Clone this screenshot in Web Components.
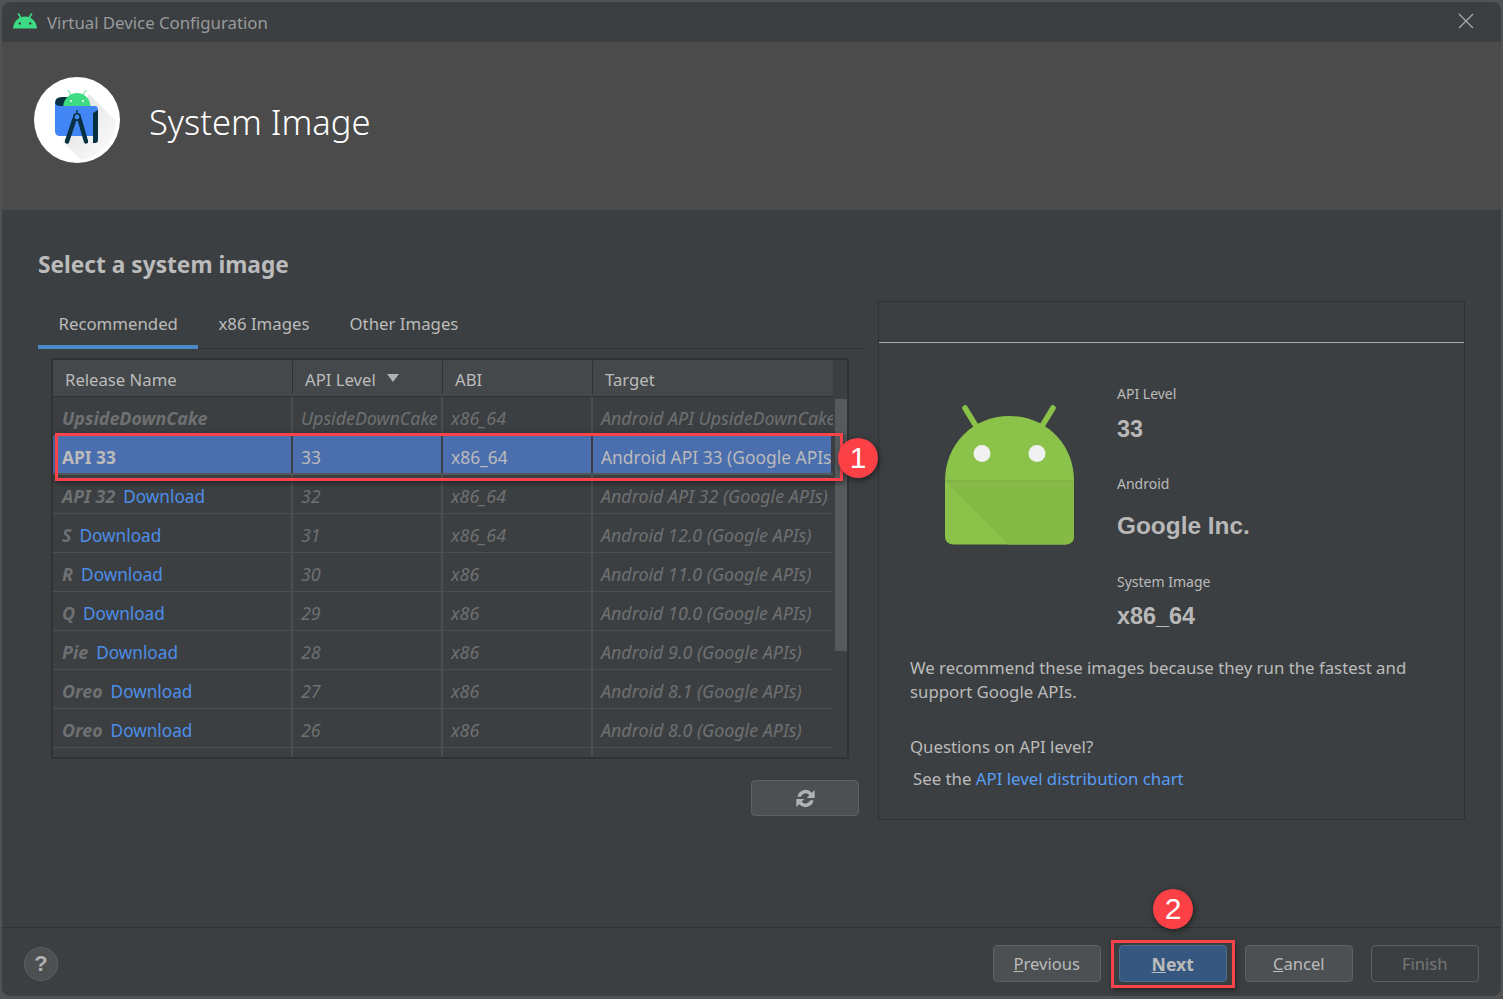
<!DOCTYPE html>
<html>
<head>
<meta charset="utf-8">
<title>Virtual Device Configuration</title>
<style>
  html, body { margin: 0; height: 999px; overflow: hidden; background: #505254; }
  body { font-family: "Noto Sans", "Open Sans", sans-serif; color: #bbb; }
</style>
</head>
<body>
<device-wizard>
  <wizard-titlebar slot="top">Virtual Device Configuration</wizard-titlebar>
  <wizard-banner slot="top">System Image</wizard-banner>
  <image-step>
    <image-tabs></image-tabs>
    <image-table></image-table>
    <image-details slot="side"></image-details>
  </image-step>
  <wizard-footer slot="bottom">
    <wizard-button slot="buttons" key="P" rest="revious"></wizard-button>
    <wizard-button slot="buttons" key="N" rest="ext" kind="primary"></wizard-button>
    <wizard-button slot="buttons" key="C" rest="ancel"></wizard-button>
    <wizard-button slot="buttons" rest="Finish" kind="off"></wizard-button>
  </wizard-footer>
  <!-- red tutorial marks sit over the dialog -->
  <tutorial-box slot="marks" style="left:55px;top:433px;width:782px;height:42px"></tutorial-box>
  <tutorial-dot slot="marks" style="left:838px;top:438px">1</tutorial-dot>
  <tutorial-box slot="marks" style="left:1111px;top:940px;width:118px;height:42px"></tutorial-box>
  <tutorial-dot slot="marks" style="left:1153px;top:889px">2</tutorial-dot>
</device-wizard>

<script>
(function(){

// helper so every element only has to give its markup
function shadow(el, html) {
  el.attachShadow({mode: 'open'}).innerHTML = html
}

class DeviceWizard extends HTMLElement {
  constructor() {
    super()
    shadow(this, `
      <style>
        :host { display: block; position: relative; width: 1503px; height: 999px; }
        .win {
          position: absolute; inset: 2px 2px 3px 2px;
          display: flex; flex-direction: column;
          background: #3c3f41; border-radius: 8px; overflow: hidden;
        }
        .mid { flex: 1; min-height: 0; }
      </style>
      <div class="win">
        <slot name="top"></slot>
        <div class="mid"><slot></slot></div>
        <slot name="bottom"></slot>
      </div>
      <slot name="marks"></slot>`)
  }
}

class WizardTitlebar extends HTMLElement {
  constructor() {
    super()
    shadow(this, `
      <style>
        :host { display: flex; align-items: center; height: 40px; padding: 0 0 0 11px; font-size: 16.8px; color: #989a9c; }
        svg.logo { width: 24px; height: 16px; margin-right: 10px; margin-top: -2px; }
        .txt { flex: 1; }
        svg.close { width: 16px; height: 16px; margin-right: 27px; margin-top: -3px; }
      </style>
      <svg class="logo" viewBox="0 0 24 16">
        <path d="M5.5 1 L8 5 M18.5 1 L16 5" stroke="#3ddc84" stroke-width="1.6" stroke-linecap="round"/>
        <path d="M0 15.5 C.6 8 6 3.6 12 3.6 S23.4 8 24 15.5 Z" fill="#3ddc84"/>
        <circle cx="6.8" cy="10.4" r="1.2" fill="#3c3f41"/><circle cx="17.2" cy="10.4" r="1.2" fill="#3c3f41"/>
      </svg>
      <span class="txt"><slot></slot></span>
      <svg class="close" viewBox="0 0 16 16"><path d="M1 1 L15 15 M15 1 L1 15" stroke="#a5a7a9" stroke-width="1.4"/></svg>`)
  }
}

class WizardBanner extends HTMLElement {
  constructor() {
    super()
    shadow(this, `
      <style>
        :host { display: flex; align-items: center; height: 168px; padding-left: 31px; background: #4b4b4b; }
        svg { width: 88px; height: 88px; margin-right: 28px; margin-bottom: 12px; }
        .t { font-size: 34.5px; font-weight: 300; color: #fff; margin-bottom: 9px; }
      </style>
      <svg viewBox="0 0 88 88">
        <defs><linearGradient id="sh" x1="0" y1="0" x2="1" y2="1">
          <stop offset="0" stop-color="#000" stop-opacity=".14"/><stop offset="1" stop-color="#000" stop-opacity="0"/>
        </linearGradient></defs>
        <circle cx="44" cy="44" r="43" fill="#fff"/>
        <path d="M56 18 L83 45 A40 40 0 0 1 48 84 L30 66 Z" fill="url(#sh)"/>
        <path d="M35 14 L38 19 M53 14 L50 19" stroke="#3ddc84" stroke-width=".9"/>
        <path d="M22 27 Q22 21 29 21 L42 21 L42 36 L22 36 Z" fill="#073042"/>
        <path d="M30 31 C31 21 38 17 44 17 S57 21 57.500 31 Z" fill="#3ddc84"/>
        <circle cx="38" cy="25" r="1" fill="#fff"/><circle cx="50" cy="25" r="1" fill="#fff"/>
        <path d="M22 26 Q22 30 28 30 L62 30 Q65 30 65 34 L65 60 L27 60 Q22 60 22 55 Z" fill="#4285f4"/>
        <path d="M60 37 L65 34 L65 64 Q65 67 62 67 L60 67 Z" fill="#073042"/>
        <path d="M41.500 43 L34 65.500 M46.500 43 L53 65.500" stroke="#073042" stroke-width="4.400" stroke-linecap="round"/>
        <circle cx="44" cy="41" r="3.200" fill="#4285f4" stroke="#073042" stroke-width="1.600"/>
        <path d="M44 34 L44 38" stroke="#073042" stroke-width="1.400"/>
      </svg>
      <span class="t"><slot></slot></span>`)
  }
}

class ImageStep extends HTMLElement {
  constructor() {
    super()
    shadow(this, `
      <style>
        :host { display: block; padding: 39px 36px 0 36px; }
        h2 { margin: 0 0 20px; font-size: 22.7px; line-height: 32px; font-weight: 700; color: #bbb; }
        .cols { display: flex; gap: 14px; align-items: flex-start; }
        .left { width: 826px; }
        .refresh {
          display: flex; align-items: center; justify-content: center;
          box-sizing: border-box; width: 108px; height: 36px; margin: 21px 0 0 713px;
          background: #4c5052; border: 1px solid #5e6060; border-radius: 4px;
        }
        .refresh svg { width: 23px; height: 23px; }
      </style>
      <h2>Select a system image</h2>
      <div class="cols">
        <div class="left">
          <slot></slot>
          <div class="refresh">
            <svg viewBox="0 0 20 20" fill="#afb1b3">
              <path d="M3 8.500 A7.200 7.200 0 0 1 15.500 5 L18 2.500 L18 9.500 L11 9.500 L13.400 7.100 A4.300 4.300 0 0 0 6 8.500 Z"/>
              <path d="M17 11.500 A7.200 7.200 0 0 1 4.500 15 L2 17.500 L2 10.500 L9 10.500 L6.600 12.900 A4.300 4.300 0 0 0 14 11.500 Z"/>
            </svg>
          </div>
        </div>
        <slot name="side"></slot>
      </div>`)
  }
}

class ImageTabs extends HTMLElement {
  constructor() {
    super()
    shadow(this, `
      <style>
        :host { display: flex; height: 47px; border-bottom: 1px solid #323232; font-size: 16.8px; color: #bbb; }
        span { display: flex; align-items: center; box-sizing: border-box; height: 48px; padding: 0 20px 4px; }
        .on { border-bottom: 4px solid #4a88c7; padding: 0 20.500px; }
      </style>
      <span class="on">Recommended</span><span>x86 Images</span><span>Other Images</span>`)
  }
}

const rows = [
  ['UpsideDownCake', false, 'UpsideDownCake', 'x86_64', 'Android API UpsideDownCake'],
  ['API 33', false, '33', 'x86_64', 'Android API 33 (Google APIs)', true],
  ['API 32', true, '32', 'x86_64', 'Android API 32 (Google APIs)'],
  ['S', true, '31', 'x86_64', 'Android 12.0 (Google APIs)'],
  ['R', true, '30', 'x86', 'Android 11.0 (Google APIs)'],
  ['Q', true, '29', 'x86', 'Android 10.0 (Google APIs)'],
  ['Pie', true, '28', 'x86', 'Android 9.0 (Google APIs)'],
  ['Oreo', true, '27', 'x86', 'Android 8.1 (Google APIs)'],
  ['Oreo', true, '26', 'x86', 'Android 8.0 (Google APIs)'],
  ['', false, '', '', '']
]

class ImageTable extends HTMLElement {
  constructor() {
    super()
    let body = rows.map(r => {
      let link = r[1] ? '<a>Download</a>' : ''
      return `<div class="row ${r[5] ? 'sel' : ''}">
        <div class="c"><b>${r[0]}</b>${link}</div><div class="c">${r[2]}</div><div class="c">${r[3]}</div><div class="c">${r[4]}</div>
      </div>`
    }).join('')
    shadow(this, `
      <style>
        :host {
          display: block; position: relative; box-sizing: border-box; width: 798px; height: 401px;
          margin: 9px 0 0 13px; border: 2px solid #323232; overflow: hidden;
        }
        .head, .row { display: grid; grid-template-columns: 240px 150px 150px 240px; width: 780px; }
        .head { height: 37px; background: #45484a; border-bottom: 1px solid #323232; box-sizing: border-box; color: #bbb; font-size: 16.7px; }
        .head div { display: flex; align-items: center; padding-left: 12px; margin: 1px 0 2px; border-right: 1px solid #323232; padding-top: 3px; }
        .head div:last-child { border-right: 0; }
        .arrow { width: 0; height: 0; margin: -2px 0 0 11px; border: 6.500px solid transparent; border-top: 8px solid #afb1b3; border-bottom: 0; }
        .row { box-sizing: border-box; height: 39px; border-bottom: 1px solid #4b4e50; font-size: 17.85px; font-style: italic; color: #6e7072; }
        .c {
          box-sizing: border-box; padding: 4px 0 0 8px; line-height: 35px; white-space: nowrap; overflow: hidden;
          border-right: 2px solid #4b4e50;
        }
        .c:first-child { padding-left: 9px; }
        .c:last-child { border-right: 0; }
        b { font-weight: 700; }
        a { font-style: normal; font-size: 17.2px; color: #4c8ee8; margin-left: 8px; }
        .sel {
          background: linear-gradient(#4b6eaf, #4b6eaf) no-repeat; background-size: 778px 100%;
          color: #bbb; font-style: normal; font-size: 17.4px; border-bottom: 2px solid #53575a;
        }
        .sel .c { border-right-color: #3c3f41; }
        .sel .c:last-child { margin-right: 2px; }
        .bar { position: absolute; left: 780px; top: 0; bottom: 0; width: 14px; background: #3c3f41; }
        .thumb { margin: 39px 0 0 2px; height: 252px; background: #575a5c; }
      </style>
      <div class="head">
        <div>Release Name</div><div>API Level<i class="arrow"></i></div><div>ABI</div><div>Target</div>
      </div>
      ${body}
      <div class="bar"><div class="thumb"></div></div>`)
  }
}

class ImageDetails extends HTMLElement {
  constructor() {
    super()
    shadow(this, `
      <style>
        :host { display: block; box-sizing: border-box; width: 587px; height: 519px; border: 1px solid #323232; font-size: 16.8px; }
        .strip { height: 40px; border-bottom: 1px solid #a9abad; }
        .info { display: flex; padding: 40px 0 0 64px; height: 270px; box-sizing: border-box; }
        svg { width: 132px; height: 144px; margin-top: 19px; margin-right: 42px; flex: none; }
        .k { font-size: 14px; line-height: 20px; color: #bbb; }
        .v { font-family: "Liberation Sans", Arial, sans-serif; font-weight: 700; color: #b8b8b8; font-size: 23.400px; line-height: 28px; }
        .big { font-size: 24.400px; }
        .text { padding-left: 31px; line-height: 24px; color: #bbb; }
        p { margin: 0; }
        .q { margin-top: 31px; }
        .see { margin: 8px 0 0 3px; }
        a { color: #589df6; }
      </style>
      <div class="strip"></div>
      <div class="info">
        <svg viewBox="0 0 132 144">
          <path d="M22 6 L33 24 M110 6 L99 24" stroke="#8bc34a" stroke-width="5.500" stroke-linecap="round"/>
          <path d="M2 79 C2 42 30 14 66.500 14 S131 42 131 79 L131 134 Q131 142.500 122 142.500 L11 142.500 Q2 142.500 2 134 Z" fill="#8bc34a"/>
          <path d="M2 79 L131 79 L131 134 Q131 142.500 122 142.500 L65 142.500 Z" fill="#85ba46"/>
          <path d="M2 79 L131 79" stroke="#7fae45" stroke-width="1.500"/>
          <circle cx="39" cy="51.500" r="8.500" fill="#f1f1f1"/><circle cx="94" cy="51.500" r="8.500" fill="#f1f1f1"/>
        </svg>
        <div>
          <div class="k" style="margin-top:1px">API Level</div>
          <div class="v" style="margin-top:11px">33</div>
          <div class="k" style="margin-top:31px">Android</div>
          <div class="v big" style="margin-top:18px">Google Inc.</div>
          <div class="k" style="margin-top:32px">System Image</div>
          <div class="v" style="margin-top:10px">x86_64</div>
        </div>
      </div>
      <div class="text">
        <p style="margin-top:43px">We recommend these images because they run the fastest and<br>support Google APIs.</p>
        <p class="q">Questions on API level?</p>
        <p class="see">See the <a>API level distribution chart</a></p>
      </div>`)
  }
}

class WizardFooter extends HTMLElement {
  constructor() {
    super()
    shadow(this, `
      <style>
        :host {
          display: flex; align-items: center; box-sizing: border-box; height: 69px;
          padding: 3px 22px 0 22px; border-top: 1px solid #323232;
        }
        .help {
          display: flex; align-items: center; justify-content: center; box-sizing: border-box;
          width: 34px; height: 34px; border-radius: 50%; background: #4c5052; border: 1px solid #5e6060;
          font: 700 22px "Liberation Sans", sans-serif; color: #afb1b3;
        }
        .btns { margin-left: auto; display: flex; gap: 17.500px; }
      </style>
      <div class="help">?</div>
      <div class="btns"><slot name="buttons"></slot></div>`)
  }
}

class WizardButton extends HTMLElement {
  constructor() {
    super()
    let key = this.getAttribute('key')
    let rest = this.getAttribute('rest')
    shadow(this, `
      <style>
        :host {
          display: flex; align-items: center; justify-content: center; box-sizing: border-box;
          width: 108.500px; height: 37px; border-radius: 4px; font-size: 16.600px; color: #bbb;
          background: #4c5052; border: 1px solid #5e6060;
        }
        :host([kind=primary]) { background: #365880; border-color: #4c708c; font-weight: 700; font-size: 17.600px; }
        :host([kind=off]) { background: transparent; color: #777; }
      </style>
      ${key ? `<u>${key}</u>` : ''}${rest}`)
  }
}

class TutorialBox extends HTMLElement {
  constructor() {
    super()
    shadow(this, `<style>
      :host { display: block; position: absolute; border: 3px solid #f9424a; box-shadow: 1px 2px 5px rgba(0,0,0,.45); }
    </style>`)
  }
}

class TutorialDot extends HTMLElement {
  constructor() {
    super()
    shadow(this, `<style>
      :host {
        display: flex; align-items: center; justify-content: center; position: absolute;
        width: 40px; height: 40px; border-radius: 50%; background: #fb4146; color: #fff;
        font: 400 30px "Liberation Sans", Arial, sans-serif; box-shadow: 1px 2px 6px rgba(0,0,0,.5);
      }
    </style><slot></slot>`)
  }
}

customElements.define('device-wizard', DeviceWizard)
customElements.define('wizard-titlebar', WizardTitlebar)
customElements.define('wizard-banner', WizardBanner)
customElements.define('image-step', ImageStep)
customElements.define('image-tabs', ImageTabs)
customElements.define('image-table', ImageTable)
customElements.define('image-details', ImageDetails)
customElements.define('wizard-footer', WizardFooter)
customElements.define('wizard-button', WizardButton)
customElements.define('tutorial-box', TutorialBox)
customElements.define('tutorial-dot', TutorialDot)

}())
</script>
</body>
</html>
